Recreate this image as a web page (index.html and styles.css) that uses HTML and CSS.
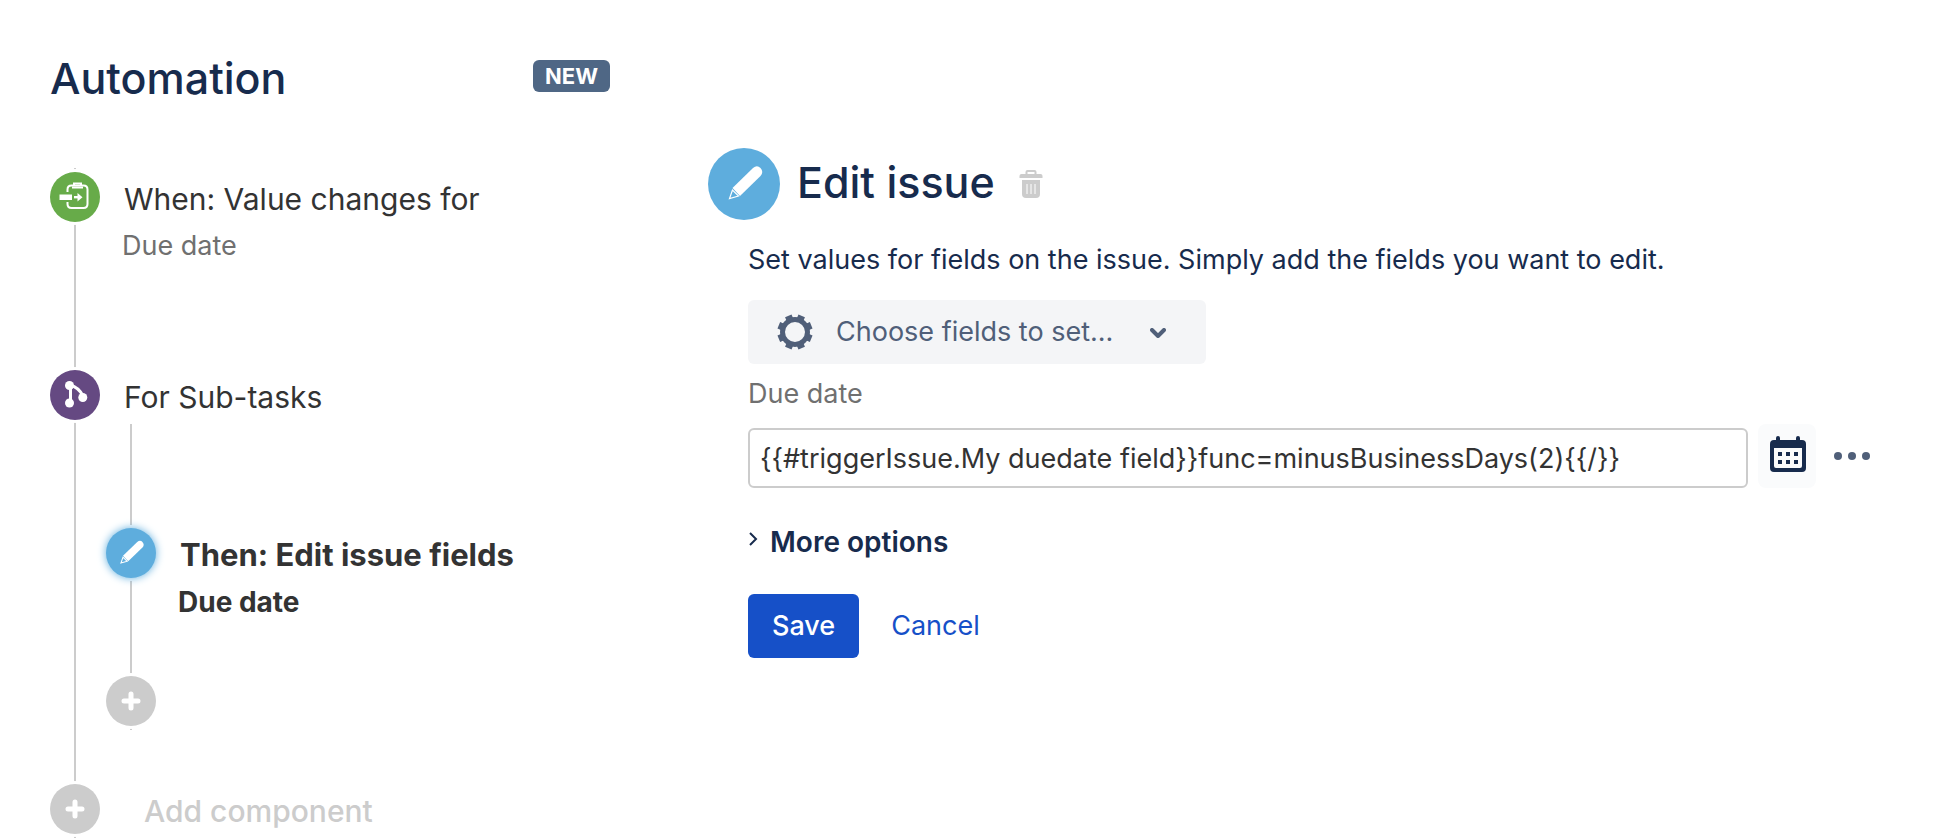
FILE: index.html
```html
<!DOCTYPE html>
<html lang="en">
<head>
    <meta charset="UTF-8">
    <meta name="viewport" content="width=device-width, initial-scale=1.0">
    <title>Automation</title>
    <link rel="stylesheet" href="styles.css">
</head>
<body>
    <div class="page">
        <aside class="rule">
            <header class="rule-header">
                <h1>Automation</h1>
                <span class="badge">NEW</span>
            </header>

            <ul class="steps">
                <li class="step trigger">
                    <span class="step-icon green">
                        <svg width="50" height="50" viewBox="0 0 50 50" fill="none" stroke="#fff" stroke-width="2">
                            <path d="M17.500 20V17.500Q17.500 13.500 21.500 13.500H33.500Q37.500 13.500 37.500 17.500V32Q37.500 36 33.500 36H21.500Q17.500 36 17.500 32V30"/>
                            <path d="M22 15.500H33M24 13.500V11.500H31V13.500"/>
                            <path d="M9.500 22.500H22V28H9.500Z" fill="#fff" stroke="none"/>
                            <path d="M24 25.200H29" stroke-width="2.400"/>
                            <path d="M27.500 21L32.500 25.200L27.500 29.500Z" fill="#fff" stroke="none"/>
                        </svg>
                    </span>
                    <div class="step-text">
                        <h3>When: Value changes for</h3>
                        <p>Due date</p>
                    </div>
                </li>
                <li class="branch">
                    <div class="step">
                        <span class="step-icon purple">
                            <svg width="50" height="50" viewBox="0 0 50 50" fill="#fff">
                                <circle cx="19.500" cy="15.500" r="4.500"/>
                                <circle cx="19.500" cy="33" r="4.500"/>
                                <circle cx="32.800" cy="27.500" r="4.500"/>
                                <path d="M20.500 15.500V33M20 15Q29 17.500 33 26" fill="none" stroke="#fff" stroke-width="3"/>
                            </svg>
                        </span>
                        <div class="step-text">
                            <h3>For Sub-tasks</h3>
                        </div>
                    </div>
                    <ul class="steps nested">
                        <li class="step active">
                            <span class="step-icon blue">
                                <svg width="50" height="50" viewBox="0 0 72 72" fill="#fff">
                                    <path d="M24.500 40L45 20Q49 16.500 52.500 20Q56 24 52.500 28L32 48Z"/>
                                    <path d="M24.500 42L21.500 50.500L30.500 48Z" fill="none" stroke="#fff" stroke-width="1.500"/>
                                </svg>
                            </span>
                            <div class="step-text">
                                <h3>Then: Edit issue fields</h3>
                                <p>Due date</p>
                            </div>
                        </li>
                        <li class="step">
                            <button type="button" class="step-icon add" aria-label="Add to branch">
                                <svg width="50" height="50" viewBox="0 0 50 50" stroke="#fff" stroke-width="5" stroke-linecap="round">
                                    <path d="M18 25H32M25 18V32"/>
                                </svg>
                            </button>
                        </li>
                    </ul>
                </li>
                <li class="step">
                    <button type="button" class="step-icon add" id="add-component" aria-labelledby="add-label">
                        <svg width="50" height="50" viewBox="0 0 50 50" stroke="#fff" stroke-width="5" stroke-linecap="round">
                            <path d="M18 25H32M25 18V32"/>
                        </svg>
                    </button>
                    <label class="add-label" id="add-label" for="add-component">Add component</label>
                </li>
            </ul>
        </aside>

        <main class="editor">
            <header class="editor-header">
                <span class="editor-icon">
                    <svg width="72" height="72" viewBox="0 0 72 72" fill="#fff">
                        <path d="M24.500 40L45 20Q49 16.500 52.500 20Q56 24 52.500 28L32 48Z"/>
                        <path d="M24.500 42L21.500 50.500L30.500 48Z" fill="none" stroke="#fff" stroke-width="1.200"/>
                    </svg>
                </span>
                <h2>Edit issue</h2>
                <button type="button" class="icon-button" aria-label="Delete">
                    <svg width="24" height="28" viewBox="0 0 24 28" fill="#ccc">
                        <path d="M2.500 4H21.500Q23.500 4 23.500 6V8H.500V6Q.500 4 2.500 4Z"/>
                        <path d="M7.500 4V2Q7.500 1 8.500 1H15.500Q16.500 1 16.500 2V4" fill="none" stroke="#ccc" stroke-width="2"/>
                        <path d="M3 10H21V24Q21 28 17 28H7Q3 28 3 24Z"/>
                        <path d="M8 14V24M12 14V24M16 14V24" stroke="#fff" stroke-width="1"/>
                    </svg>
                </button>
            </header>

            <form class="editor-form">
                <p class="description">Set values for fields on the issue. Simply add the fields you want to edit.</p>

                <div class="field-picker">
                    <svg class="gear" width="36" height="36" viewBox="-18 -18 36 36" fill="none" stroke="#505f79">
                        <circle r="12.500" stroke-width="5"/>
                        <path d="M11.100 4.600L16.200 6.700M4.600 11.100L6.700 16.200M-4.600 11.100L-6.700 16.200M-11.100 4.600L-16.200 6.700M-11.100 -4.600L-16.200 -6.700M-4.600 -11.100L-6.700 -16.200M4.600 -11.100L6.700 -16.200M11.100 -4.600L16.200 -6.700" stroke-width="7"/>
                    </svg>
                    <select aria-label="Choose fields to set">
                        <option>Choose fields to set...</option>
                    </select>
                    <svg class="chevron" width="16" height="10" viewBox="0 0 16 10" fill="none" stroke="#505f79" stroke-width="4" stroke-linecap="round" stroke-linejoin="round">
                        <path d="M2 2L8 8L14 2"/>
                    </svg>
                </div>

                <label class="field-label" for="duedate">Due date</label>
                <div class="field-row">
                    <input type="text" id="duedate" value="{{#triggerIssue.My duedate field}}func=minusBusinessDays(2){{/}}">
                    <button type="button" class="calendar-button" aria-label="Pick a date">
                        <svg width="36" height="36" viewBox="0 0 36 36" fill="#172b4d">
                            <path d="M4 4H32Q36 4 36 8V32Q36 36 32 36H4Q0 36 0 32V8Q0 4 4 4ZM4 12V30Q4 32 6 32H30Q32 32 32 30V12Z" fill-rule="evenodd"/>
                            <path d="M8 6V2M28 6V2" stroke="#172b4d" stroke-width="4" stroke-linecap="round"/>
                            <path d="M8 16h4v4h-4zM16 16h4v4h-4zM24 16h4v4h-4zM8 24h4v4h-4zM16 24h4v4h-4zM24 24h4v4h-4z"/>
                        </svg>
                    </button>
                    <button type="button" class="icon-button more-button" aria-label="More">
                        <svg width="36" height="8" viewBox="0 0 36 8" fill="#505f79">
                            <circle cx="4" cy="4" r="4"/>
                            <circle cx="18" cy="4" r="4"/>
                            <circle cx="32" cy="4" r="4"/>
                        </svg>
                    </button>
                </div>

                <button type="button" class="more-options">
                    <svg width="10" height="16" viewBox="0 0 10 16" fill="none" stroke="#172b4d" stroke-width="2">
                        <path d="M2 2L8 8L2 14"/>
                    </svg>
                    More options
                </button>

                <div class="actions">
                    <button type="submit" class="save">Save</button>
                    <a href="#" class="cancel">Cancel</a>
                </div>
            </form>
        </main>
    </div>
</body>
</html>
```
FILE: styles.css
```css
* {
    box-sizing: border-box;
}
body {
    margin: 0;
    background: #fff;
    color: #333;
    font-family: Inter, "Liberation Sans", sans-serif;
    font-size: 27px;
    line-height: 40px;
}
h1, h2, h3, p, ul {
    margin: 0;
    padding: 0;
}
svg {
    display: block;
}
button, input, select {
    font: inherit;
    margin: 0;
    padding: 0;
    border: none;
    background: none;
}
button {
    cursor: pointer;
}
h1, h2 {
    color: #172b4d;
    font-size: 43px;
    font-weight: 500;
    line-height: 68px;
}
.page {
    display: flex;
    gap: 98px;
    padding: 44px 78px 0 50px;
}

/* rule steps */
.rule {
    flex: 0 0 560px;
}
.rule-header {
    display: flex;
    align-items: flex-start;
    justify-content: space-between;
    margin-bottom: 56px;
}
.badge {
    margin-top: 16px;
    padding: 0 12px;
    border-radius: 6px;
    background: #4f6785;
    color: #fff;
    font-size: 22px;
    font-weight: 700;
    line-height: 32px;
}
.steps {
    list-style: none;
    padding: 4px 0;
    background: linear-gradient(#ccc, #ccc) 24px 0 / 2px 100% no-repeat;
}
.nested {
    margin: 4px 0 54px 56px;
    padding-top: 104px;
}
.step {
    display: flex;
    align-items: flex-start;
    gap: 22px;
}
.trigger {
    min-height: 198px;
}
.active {
    min-height: 148px;
}
.branch > .step {
    height: 50px;
}
.step-icon {
    flex: none;
    width: 50px;
    height: 50px;
    border-radius: 50%;
    box-shadow: 0 0 0 3px #fff;
}
.green {
    background: #67ab49;
}
.purple {
    background: #654982;
}
.blue {
    background: #5eaddd;
}
.active .step-icon {
    box-shadow: 0 0 8px #5eaddd, 0 0 0 3px #fff;
}
.add {
    background: #ccc;
}
.step-text h3 {
    padding-left: 2px;
    font-size: 30px;
    font-weight: inherit;
    line-height: 54px;
}
.step-text p {
    color: #707070;
    line-height: 40px;
}
.active .step-text {
    font-size: 28px;
    font-weight: 700;
}
.active .step-text h3 {
    font-size: 31px;
}
.active .step-text p {
    color: #333;
}
.add-label {
    height: 50px;
    padding-left: 22px;
    color: #ccc;
    font-size: 30px;
    font-weight: 500;
    line-height: 54px;
}

/* editor */
.editor {
    flex: 1;
    min-width: 0;
    padding-top: 104px;
}
.editor-header {
    display: flex;
    align-items: center;
}
.editor-header h2 {
    margin: 0 24px 0 17px;
    padding-bottom: 4px;
}
.editor-icon {
    width: 72px;
    height: 72px;
    border-radius: 50%;
    background: #5eaddd;
}
.editor-form {
    padding: 20px 0 0 40px;
}
.description {
    margin-bottom: 20px;
    color: #172b4d;
}
.field-picker {
    position: relative;
    width: 458px;
    margin-bottom: 10px;
    color: #505f79;
}
.field-picker select {
    display: block;
    width: 100%;
    height: 64px;
    padding: 0 80px 0 88px;
    border-radius: 6px;
    background: #f4f5f7;
    color: inherit;
    appearance: none;
}
.gear {
    position: absolute;
    top: 14px;
    left: 29px;
}
.chevron {
    position: absolute;
    top: 28px;
    right: 40px;
}
.field-label {
    display: block;
    margin-bottom: 10px;
    color: #707070;
}
.field-row {
    display: flex;
    align-items: flex-end;
    margin-bottom: 34px;
}
.field-row input {
    flex: 1;
    min-width: 0;
    height: 60px;
    padding: 0 10px;
    border: 2px solid #ccc;
    border-radius: 6px;
    color: #333;
}
.calendar-button {
    display: flex;
    width: 58px;
    height: 64px;
    margin: 0 18px 0 10px;
    padding: 12px 10px 12px 12px;
    border-radius: 8px;
    background: #fafbfc;
}
.more-button {
    height: 64px;
}
.more-options {
    display: flex;
    align-items: center;
    gap: 12px;
    margin-bottom: 32px;
    color: #172b4d;
    font-size: 28px;
    font-weight: 600;
}
.more-options svg {
    margin-bottom: 6px;
}
.actions {
    display: flex;
    align-items: center;
    gap: 32px;
}
.save {
    height: 64px;
    padding: 0 24px;
    border-radius: 6px;
    background: #1650c8;
    color: #fff;
    font-weight: 500;
}
.cancel {
    color: #1650c8;
    text-decoration: none;
}
```
